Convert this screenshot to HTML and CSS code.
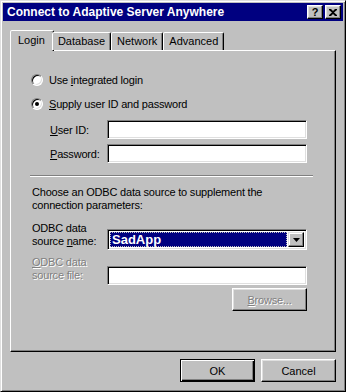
FILE: index.html
```html
<html lang="en">
<head>
  <meta charset="UTF-8" />
  <title>Connect to Adaptive Server Anywhere</title>
  <link rel="stylesheet" href="styles.css">
</head>
<body>
  <div class="window">
    <div class="titlebar">
      <span class="title">Connect to Adaptive Server Anywhere</span>
      <div class="caption-buttons">
        <span class="cap-btn help">?</span>
        <span class="cap-btn close">
          <svg width="8" height="7" viewBox="0 0 8 7"><path d="M0 0h2l2 2 2-2h2v1L5 3.5 8 6v1H6L4 5 2 7H0V6l3-2.5L0 1z" fill="#000"/></svg>
        </span>
      </div>
    </div>

    <div class="content">
      <div class="tabs">
        <span class="tab active">Login</span>
        <span class="tab">Database</span>
        <span class="tab">Network</span>
        <span class="tab">Advanced</span>
      </div>

      <div class="panel">
        <div class="radio"><span class="dot"></span><span>Use <u>i</u>ntegrated login</span></div>
        <div class="radio second"><span class="dot checked"></span><span><u>S</u>upply user ID and password</span></div>

        <div class="field user">
          <span class="lbl"><u>U</u>ser ID:</span>
          <span class="input"></span>
        </div>
        <div class="field pass">
          <span class="lbl"><u>P</u>assword:</span>
          <span class="input"></span>
        </div>

        <div class="sep"></div>

        <p class="note">Choose an ODBC data source to supplement the<br>connection parameters:</p>

        <div class="field wide dsn">
          <span class="lbl">ODBC data<br>source <u>n</u>ame:</span>
          <div class="combo">
            <span class="combo-value">SadApp</span>
            <span class="combo-arrow"><svg width="7" height="4" viewBox="0 0 7 4"><path d="M0 0h7L3.5 4z" fill="#000"/></svg></span>
          </div>
        </div>

        <div class="field wide file disabled">
          <span class="lbl"><u>O</u>DBC data<br>source file:</span>
          <span class="input"></span>
        </div>

        <div class="browse-row">
          <span class="btn disabled"><span><u>B</u>rowse...</span></span>
        </div>
      </div>

      <div class="actions">
        <span class="btn default">OK</span>
        <span class="btn">Cancel</span>
      </div>
    </div>
  </div>
</body>
</html>
```

FILE: styles.css
```css
    :root {
      --face: #c0c0c0;
      --light: #dfdfdf;
      --shadow: #808080;
      --navy: #000080;
    }

    body {
      margin: 0;
      font-family: 'Liberation Sans', Arial, sans-serif;
      font-size: 11px;
      color: #000;
      background: var(--face);
    }

    .window {
      width: 346px;
      height: 392px;
      box-sizing: border-box;
      padding: 2px;
      background: var(--face);
      border: 1px solid;
      border-color: var(--light) #000 #000 var(--light);
      box-shadow: inset 1px 1px #fff, inset -1px -1px var(--shadow);
      display: flex;
      flex-direction: column;
    }

    .titlebar {
      height: 18px;
      background: var(--navy);
      display: flex;
      align-items: center;
      justify-content: space-between;
      padding: 0 2px 0 4px;
      flex-shrink: 0;
    }

    .title {
      color: #fff;
      font-weight: bold;
      font-size: 12px;
    }

    .caption-buttons {
      display: flex;
      gap: 2px;
    }

    .cap-btn {
      width: 16px;
      height: 14px;
      box-sizing: border-box;
      background: var(--face);
      border: 1px solid;
      border-color: #fff #000 #000 #fff;
      box-shadow: inset -1px -1px var(--shadow), inset 1px 1px var(--light);
      display: flex;
      align-items: center;
      justify-content: center;
      font-weight: bold;
      font-size: 11px;
      line-height: 1;
    }

    .content {
      flex: 1;
      display: flex;
      flex-direction: column;
      padding: 9px 7px 7px 7px;
    }

    .tabs {
      display: flex;
      align-items: flex-end;
      height: 20px;
      position: relative;
      z-index: 1;
    }

    .tab {
      height: 18px;
      box-sizing: border-box;
      padding: 2px 5px 0 5px;
      border: 1px solid;
      border-bottom: none;
      border-color: #fff #000 transparent #fff;
      box-shadow: inset -1px 0 var(--shadow);
      border-radius: 2px 2px 0 0;
      background: var(--face);
    }

    .tab.active {
      height: 21px;
      margin-bottom: -1px;
      padding: 3px 8px 0 7px;
      margin-right: -2px;
    }

    .panel {
      flex: 1;
      box-sizing: border-box;
      border: 1px solid;
      border-color: #fff #000 #000 #fff;
      box-shadow: inset -1px -1px var(--shadow);
      padding: 22px 0 0 19px;
      display: flex;
      flex-direction: column;
      letter-spacing: -0.2px;
    }

    .radio {
      display: flex;
      align-items: center;
      gap: 6px;
      height: 13px;
      margin-left: 1px;
    }

    .radio.second {
      margin-top: 11px;
    }

    .dot {
      width: 12px;
      height: 12px;
      box-sizing: border-box;
      border-radius: 50%;
      background: #fff;
      border: 1px solid;
      border-color: var(--shadow) #fff #fff var(--shadow);
      box-shadow: inset 1px 1px #000, inset -1px -1px var(--light);
      display: flex;
      align-items: center;
      justify-content: center;
    }

    .dot.checked::after {
      content: "";
      width: 4px;
      height: 4px;
      border-radius: 50%;
      background: #000;
    }

    .field {
      display: flex;
      align-items: center;
      padding-left: 20px;
    }

    .field .lbl {
      width: 57px;
    }

    .field.user {
      margin-top: 10px;
    }

    .field.pass {
      margin-top: 5px;
    }

    .field.wide {
      padding-left: 2px;
      align-items: flex-start;
      line-height: 13px;
    }

    .field.wide .lbl {
      width: 75px;
    }

    .input {
      width: 200px;
      height: 19px;
      box-sizing: border-box;
      background: #fff;
      border: 1px solid;
      border-color: var(--shadow) #fff #fff var(--shadow);
      box-shadow: inset 1px 1px #000, inset -1px -1px var(--light);
    }

    .sep {
      width: 283px;
      height: 1px;
      margin-top: 12px;
      background: var(--shadow);
      border-bottom: 1px solid #fff;
    }

    .note {
      margin: 9px 0 0 2px;
      line-height: 13px;
    }

    .field.dsn {
      margin-top: 10px;
    }

    .combo {
      margin-top: 7px;
      width: 200px;
      height: 21px;
      box-sizing: border-box;
      background: #fff;
      border: 1px solid;
      border-color: var(--shadow) #fff #fff var(--shadow);
      box-shadow: inset 1px 1px #000, inset -1px -1px var(--light);
      padding: 2px;
      display: flex;
      gap: 1px;
    }

    .combo-value {
      flex: 1;
      background: var(--navy);
      color: #fff;
      font-weight: bold;
      font-size: 13px;
      line-height: 15px;
      letter-spacing: 0;
      padding-left: 2px;
      outline: 1px dotted #c0c0c0;
      outline-offset: -1px;
    }

    .combo-arrow {
      width: 16px;
      box-sizing: border-box;
      background: var(--face);
      border: 1px solid;
      border-color: var(--light) #000 #000 var(--light);
      box-shadow: inset -1px -1px var(--shadow), inset 1px 1px #fff;
      display: flex;
      align-items: center;
      justify-content: center;
    }

    .field.file {
      margin-top: 6px;
    }

    .field.file .input {
      margin-top: 10px;
    }

    .disabled .lbl,
    .btn.disabled {
      color: var(--shadow);
      text-shadow: 1px 1px #fff;
    }

    .browse-row {
      display: flex;
      justify-content: flex-end;
      width: 277px;
      margin-top: 3px;
    }

    .btn {
      width: 75px;
      height: 23px;
      box-sizing: border-box;
      background: var(--face);
      border: 1px solid;
      border-color: #fff #000 #000 #fff;
      box-shadow: inset -1px -1px var(--shadow), inset 1px 1px var(--light);
      display: flex;
      align-items: center;
      justify-content: center;
    }

    .btn.default {
      border: 1px solid #000;
      box-shadow: inset 1px 1px #fff, inset -1px -1px #000, inset -2px -2px var(--shadow);
    }

    .actions {
      display: flex;
      justify-content: flex-end;
      gap: 6px;
      margin-top: 7px;
    }
```
